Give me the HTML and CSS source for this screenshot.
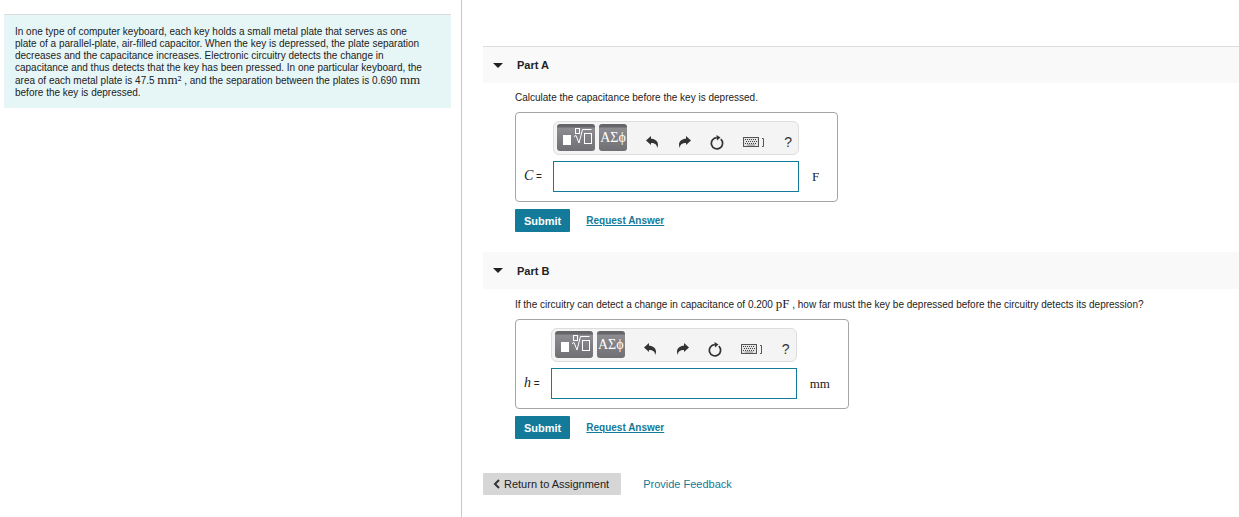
FILE: index.html
```
<!DOCTYPE html>
<html lang="en">
<head>
    <meta charset="UTF-8">
    <meta name="viewport" content="width=device-width, initial-scale=1.0">
    <title>Keyboard Capacitor</title>
    <link rel="stylesheet" href="styles.css">
</head>
<body>
    <!-- shared toolbar icons -->
    <svg class="icon-defs" aria-hidden="true">
        <symbol id="icon-template" viewBox="0 0 38 27">
            <rect x="6" y="11" width="8" height="10" fill="#fff"/>
            <g fill="none" stroke="#fff">
                <rect x="18.5" y="4.5" width="4" height="5"/>
                <path d="M17 12.500l2-1 3 7.500 3.500-13.500h9"/>
                <rect x="27.5" y="9.5" width="7" height="10"/>
            </g>
        </symbol>
        <symbol id="icon-undo" viewBox="0 0 12 12">
            <path d="M0 4.500L5 0v2.700c4 0 7 2.400 7 6 0 1.200-.4 2.300-1 3.300.2-3.300-2-5-6-5V9z" fill="#333"/>
        </symbol>
        <symbol id="icon-redo" viewBox="0 0 12 12">
            <path d="M12 4.500L7 0v2.700C3 2.700 0 5.100 0 8.700 0 9.900.4 11 1 12c-.2-3.300 2-5 6-5v2z" fill="#333"/>
        </symbol>
        <symbol id="icon-reset" viewBox="0 0 14 15">
            <path d="M10.800 4.200A5.600 5.600 0 1 1 6.800 2.700" fill="none" stroke="#333" stroke-width="1.700"/>
            <path d="M6.500 0l4 2.600-3.500 3z" fill="#333"/>
        </symbol>
        <symbol id="icon-keyboard" viewBox="0 0 22 11">
            <rect x=".5" y=".5" width="15" height="9" fill="#e4e4e4" stroke="#555"/>
            <path d="M2 2.500h12M3 4.500h11M2 6.500h12" stroke="#444" stroke-dasharray="1 1"/>
            <path d="M4 8h8" stroke="#888"/>
            <path d="M19 1.500h1.500v8H19" fill="none" stroke="#555"/>
        </symbol>
    </svg>

    <div class="page">
        <aside class="problem-pane">
            <p class="problem">In one type of computer keyboard, each key holds a small metal plate that serves as one<br>
                plate of a parallel-plate, air-filled capacitor. When the key is depressed, the plate separation<br>
                decreases and the capacitance increases. Electronic circuitry detects the change in<br>
                capacitance and thus detects that the key has been pressed. In one particular keyboard, the<br>
                area of each metal plate is 47.5 <span class="math">mm²</span> , and the separation between the plates is 0.690 <span class="math">mm</span><br>
                before the key is depressed.</p>
        </aside>

        <main class="parts">
            <section class="part">
                <h2 class="part-header part-header-first"><span class="caret"></span>Part A</h2>
                <form class="part-body">
                    <p class="question">Calculate the capacitance before the key is depressed.</p>
                    <div class="answer">
                        <label class="answer-label" for="answerA"><i class="math">C</i> =</label>
                        <div class="answer-field">
                            <div class="toolbar">
                                <button type="button" class="tool tool-dark" aria-label="Templates"><svg width="38" height="27"><use href="#icon-template"/></svg></button>
                                <button type="button" class="tool tool-dark">ΑΣϕ</button>
                                <div class="tool-icons">
                                    <button type="button" class="tool" aria-label="Undo"><svg width="12" height="12"><use href="#icon-undo"/></svg></button>
                                    <button type="button" class="tool" aria-label="Redo"><svg width="12" height="12"><use href="#icon-redo"/></svg></button>
                                    <button type="button" class="tool" aria-label="Reset"><svg width="14" height="15"><use href="#icon-reset"/></svg></button>
                                    <button type="button" class="tool" aria-label="Keyboard shortcuts"><svg width="22" height="11"><use href="#icon-keyboard"/></svg></button>
                                    <button type="button" class="tool">?</button>
                                </div>
                            </div>
                            <input type="text" id="answerA" class="answer-input">
                        </div>
                        <span class="unit math">F</span>
                    </div>
                    <div class="actions">
                        <button type="button" class="submit">Submit</button>
                        <a href="#" class="request">Request Answer</a>
                    </div>
                </form>
            </section>

            <section class="part">
                <h2 class="part-header"><span class="caret"></span>Part B</h2>
                <form class="part-body">
                    <p class="question">If the circuitry can detect a change in capacitance of 0.200 <span class="math">pF</span> , how far must the key be depressed before the circuitry detects its depression?</p>
                    <div class="answer">
                        <label class="answer-label" for="answerB"><i class="math">h</i> =</label>
                        <div class="answer-field">
                            <div class="toolbar">
                                <button type="button" class="tool tool-dark" aria-label="Templates"><svg width="38" height="27"><use href="#icon-template"/></svg></button>
                                <button type="button" class="tool tool-dark">ΑΣϕ</button>
                                <div class="tool-icons">
                                    <button type="button" class="tool" aria-label="Undo"><svg width="12" height="12"><use href="#icon-undo"/></svg></button>
                                    <button type="button" class="tool" aria-label="Redo"><svg width="12" height="12"><use href="#icon-redo"/></svg></button>
                                    <button type="button" class="tool" aria-label="Reset"><svg width="14" height="15"><use href="#icon-reset"/></svg></button>
                                    <button type="button" class="tool" aria-label="Keyboard shortcuts"><svg width="22" height="11"><use href="#icon-keyboard"/></svg></button>
                                    <button type="button" class="tool">?</button>
                                </div>
                            </div>
                            <input type="text" id="answerB" class="answer-input">
                        </div>
                        <span class="unit math">mm</span>
                    </div>
                    <div class="actions">
                        <button type="button" class="submit">Submit</button>
                        <a href="#" class="request">Request Answer</a>
                    </div>
                </form>
            </section>

            <footer class="footer">
                <button type="button" class="return">
                    <svg width="7" height="10" viewBox="0 0 7 10"><path d="M6 1L2 5l4 4" fill="none" stroke="#333" stroke-width="2"/></svg>
                    Return to Assignment
                </button>
                <a href="#" class="feedback">Provide Feedback</a>
            </footer>
        </main>
    </div>
</body>
</html>
```
FILE: styles.css
```
:root {
    --teal: #147a99;
    --text: #222;
    --sans: "Liberation Sans", Arial, sans-serif;
    --serif: "Liberation Serif", "Times New Roman", serif;
}

* {
    box-sizing: border-box;
}

body {
    margin: 0;
    font-family: var(--sans);
    font-size: 10px;
    line-height: 12px;
    color: var(--text);
    background: #fff;
}

button {
    border: none;
    font-family: inherit;
    cursor: pointer;
}

svg {
    display: block;
}

.icon-defs {
    display: none;
}

.page {
    display: flex;
    min-height: 100vh;
}

/* left pane */
.problem-pane {
    flex: 0 0 462px;
    padding: 14px 10px 0 4px;
    border-right: 1px solid #c4c8d0;
}

.problem {
    margin: 0;
    padding: 11px 8px 9px 11px;
    border-top: 1px solid #d8dcdc;
    background: #e6f6f7;
}

.math {
    font-family: var(--serif);
    font-size: 13px;
}

/* right pane */
.parts {
    flex: 1;
    min-width: 0;
    padding: 46px 0 0 21px;
}

.part {
    margin-bottom: 20px;
}

.part-header {
    display: flex;
    align-items: center;
    gap: 14px;
    height: 37px;
    margin: 0;
    padding-left: 10px;
    font-size: 11px;
    background: #f9f9f9;
}

.part-header-first {
    border-top: 1px solid #ddd;
}

.caret {
    border: 5px solid transparent;
    border-top-color: #222;
    border-bottom: none;
}

.part-body {
    padding: 8px 0 0 32px;
}

.question {
    margin: 0;
    line-height: 14px;
}

.answer {
    display: inline-grid;
    grid-template-columns: auto auto auto;
    margin-top: 7px;
    padding: 8px 18px 9px 8px;
    border: 1px solid #a5a5a5;
    border-radius: 4px;
    vertical-align: top;
}

.answer-label,
.unit {
    align-self: end;
    line-height: 31px;
}

.answer-label {
    padding-right: 11px;
}

.answer-label .math {
    font-size: 14px;
}

.unit {
    padding-left: 13px;
}

.toolbar {
    display: flex;
    gap: 4px;
    width: 246px;
    height: 34px;
    padding: 2px 6px 0 3px;
    border: 1px solid #ddd;
    border-radius: 6px;
    background: #f4f4f4;
}

.tool {
    padding: 0;
    background: none;
    font-size: 14px;
    color: #333;
}

.tool-dark {
    width: 38px;
    height: 27px;
    border-radius: 3px;
    background: linear-gradient(#66666a, #66666a 3px, #8d8d91 4px, #707074);
    font-family: var(--serif);
    color: #fff;
}

.tool-icons {
    display: flex;
    flex: 1;
    align-items: center;
    gap: 19px;
    height: 36px;
    padding-left: 15px;
}

.tool-icons .tool:nth-child(2) {
    margin-left: 2px;
}

.tool-icons .tool:last-child {
    margin-left: auto;
}

.answer-input {
    display: block;
    width: 246px;
    height: 31px;
    margin-top: 6px;
    padding: 0 6px;
    border: 1px solid var(--teal);
    font-size: 14px;
}

.actions {
    display: flex;
    align-items: center;
    gap: 16px;
    margin-top: 7px;
}

.submit {
    height: 23px;
    padding: 0 9px;
    border-radius: 1px;
    background: var(--teal);
    font-size: 11px;
    font-weight: bold;
    color: #fff;
}

.request {
    font-weight: bold;
    color: var(--teal);
}

.footer {
    display: flex;
    align-items: center;
    gap: 22px;
    margin-top: 34px;
    font-size: 11px;
}

.return {
    display: flex;
    align-items: center;
    gap: 4px;
    height: 22px;
    padding: 0 12px 0 10px;
    border-radius: 1px;
    background: #d6d6d6;
    font-size: 11px;
    color: var(--text);
}

.feedback {
    color: var(--teal);
    text-decoration: none;
}
```
